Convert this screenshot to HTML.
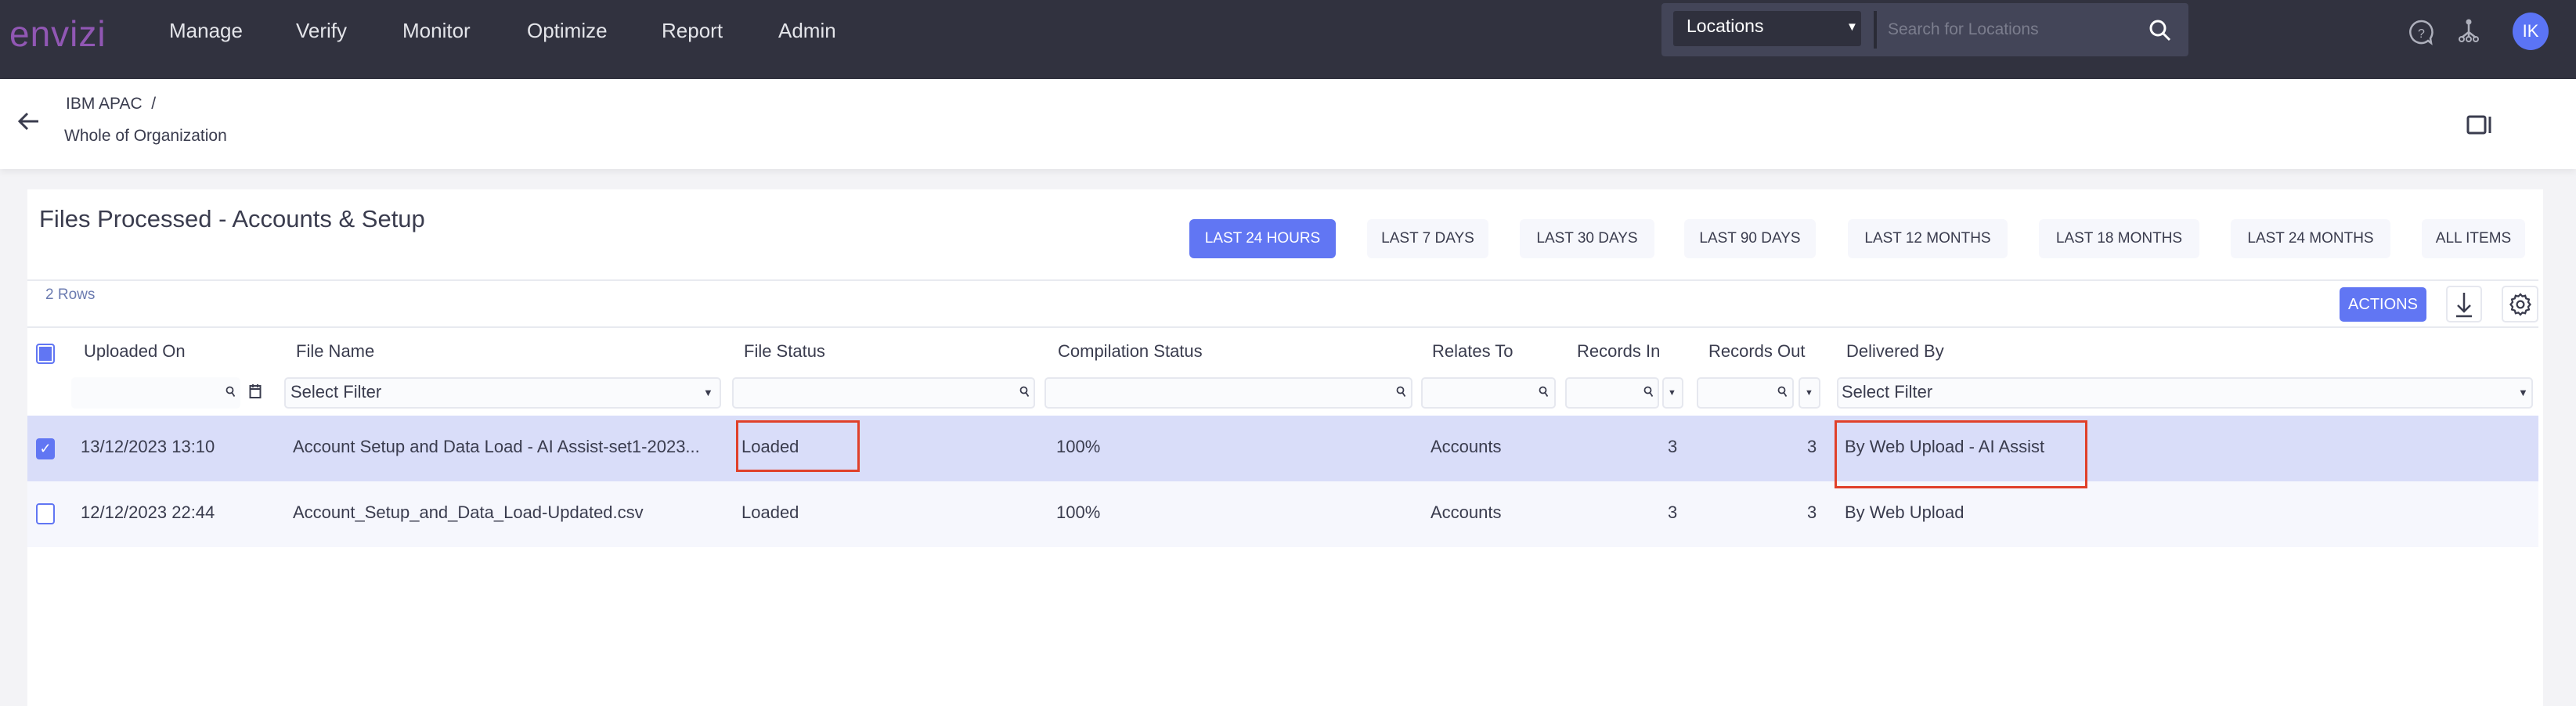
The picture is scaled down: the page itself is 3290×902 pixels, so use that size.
<!DOCTYPE html>
<html><head><meta charset="utf-8"><style>
*{margin:0;padding:0;box-sizing:border-box}
body{width:3290px;height:896px;background:#f3f3f6;font-family:"Liberation Sans",sans-serif;color:#3a3c4e;position:relative;overflow:hidden}
.a{position:absolute;white-space:nowrap}
.hdr{left:0;top:0;width:3290px;height:101px;background:#31323f}
.nav{color:#e4e5ea;font-size:26px;top:24px}
.btn{top:280px;height:50px;background:#f6f7fc;border-radius:6px;font-size:19px;line-height:50px;text-align:center;color:#3a3c4e}
.th{top:436px;font-size:22px;color:#3a3c4e}
.inp{top:482px;height:40px;background:#fafbfd;border:2px solid #e6e8ef;border-radius:5px}
.td{font-size:22px;color:#3a3c4e}
.sr{position:absolute;top:493px}
</style></head><body>
<div class="a hdr"></div>
<div class="a" style="left:12px;top:16px;font-size:46px;color:#9157b4;letter-spacing:1px">envizi</div>
<div class="a nav" style="left:216px">Manage</div>
<div class="a nav" style="left:378px">Verify</div>
<div class="a nav" style="left:514px">Monitor</div>
<div class="a nav" style="left:673px">Optimize</div>
<div class="a nav" style="left:845px">Report</div>
<div class="a nav" style="left:994px">Admin</div>
<div class="a" style="left:2122px;top:4px;width:673px;height:68px;background:#434558;border-radius:4px"></div>
<div class="a" style="left:2137px;top:14px;width:240px;height:45px;background:#2f303d;border-radius:3px"></div>
<div class="a" style="left:2154px;top:20px;font-size:23px;color:#fff">Locations</div>
<div class="a" style="left:2358px;top:26px;font-size:15px;color:#fff">▼</div>
<div class="a" style="left:2393px;top:14px;width:4px;height:48px;background:#2a2b36"></div>
<div class="a" style="left:2411px;top:26px;font-size:21px;color:#7b7d8d">Search for Locations</div>
<svg class="a" style="left:2744px;top:24px" width="30" height="30" viewBox="0 0 30 30"><circle cx="12" cy="12" r="9" fill="none" stroke="#fff" stroke-width="3"/><path d="M19 19l8 8" stroke="#fff" stroke-width="3"/></svg>
<svg class="a" style="left:3076px;top:24px" width="34" height="34" viewBox="0 0 34 34"><path d="M17 3a14 14 0 1 0 8 25l4 3-1-6A14 14 0 0 0 17 3z" fill="none" stroke="#aeb0bc" stroke-width="2.5"/><text x="12" y="24" font-size="16" fill="#aeb0bc" font-family="Liberation Sans">?</text></svg>
<svg class="a" style="left:3138px;top:22px" width="30" height="34" viewBox="0 0 30 34"><circle cx="15" cy="6" r="3.5" fill="#aeb0bc"/><path d="M15 9v10M15 19L6 26M15 19v7M15 19l9 7" stroke="#aeb0bc" stroke-width="2.5" fill="none"/><circle cx="6" cy="28" r="3" fill="none" stroke="#aeb0bc" stroke-width="2"/><circle cx="15" cy="28" r="3" fill="none" stroke="#aeb0bc" stroke-width="2"/><circle cx="24" cy="28" r="3" fill="none" stroke="#aeb0bc" stroke-width="2"/></svg>
<div class="a" style="left:3209px;top:16px;width:46px;height:48px;border-radius:50%;background:#5b74f5;color:#fff;font-size:22px;line-height:48px;text-align:center">IK</div>

<div class="a" style="left:0;top:101px;width:3290px;height:115px;background:#fff;box-shadow:0 4px 8px rgba(0,0,0,.06)"></div>
<svg class="a" style="left:22px;top:141px" width="30" height="28" viewBox="0 0 30 28"><path d="M27 14H4M13 4L3 14l10 10" fill="none" stroke="#3a3c4e" stroke-width="3"/></svg>
<div class="a" style="left:84px;top:121px;font-size:21px;color:#3a3c4e">IBM APAC &nbsp;/</div>
<div class="a" style="left:82px;top:162px;font-size:21px;color:#3a3c4e">Whole of Organization</div>
<svg class="a" style="left:3150px;top:147px" width="34" height="26" viewBox="0 0 34 26"><rect x="2" y="2" width="22" height="21" rx="2" fill="none" stroke="#3a3c4e" stroke-width="3"/><path d="M30 2v21" stroke="#3a3c4e" stroke-width="3"/></svg>

<div class="a" style="left:35px;top:242px;width:3213px;height:660px;background:#fff"></div>
<div class="a" style="left:50px;top:262px;font-size:31px;color:#3a3c4e">Files Processed - Accounts &amp; Setup</div>
<div class="a btn" style="left:1519px;width:187px;background:#6176f3;color:#fff">LAST 24 HOURS</div>
<div class="a btn" style="left:1746px;width:155px">LAST 7 DAYS</div>
<div class="a btn" style="left:1941px;width:172px">LAST 30 DAYS</div>
<div class="a btn" style="left:2151px;width:168px">LAST 90 DAYS</div>
<div class="a btn" style="left:2360px;width:204px">LAST 12 MONTHS</div>
<div class="a btn" style="left:2604px;width:205px">LAST 18 MONTHS</div>
<div class="a btn" style="left:2849px;width:204px">LAST 24 MONTHS</div>
<div class="a btn" style="left:3093px;width:132px">ALL ITEMS</div>
<div class="a" style="left:35px;top:357px;width:3207px;height:2px;background:#e8eaf0"></div>
<div class="a" style="left:58px;top:366px;font-size:19px;color:#6b7bb0">2 Rows</div>
<div class="a" style="left:2988px;top:367px;width:111px;height:44px;background:#6176f3;border-radius:5px;color:#fff;font-size:20px;line-height:44px;text-align:center">ACTIONS</div>
<div class="a" style="left:3124px;top:365px;width:46px;height:47px;border:2px solid #e6e8ef;border-radius:5px"></div>
<svg class="a" style="left:3134px;top:372px" width="26" height="34" viewBox="0 0 26 34"><path d="M13 2v24M5 18l8 8 8-8M3 32h20" fill="none" stroke="#3a3c4e" stroke-width="2.5"/></svg>
<div class="a" style="left:3195px;top:365px;width:47px;height:47px;border:2px solid #e6e8ef;border-radius:5px"></div>
<svg class="a" style="left:3204px;top:374px" width="30" height="30" viewBox="0 0 24 24"><path d="M12 1.5l2 2.2 2.9-.7.9 2.9 2.9.9-.7 2.9 2 2.3-2 2.3.7 2.9-2.9.9-.9 2.9-2.9-.7-2 2.2-2-2.2-2.9.7-.9-2.9-2.9-.9.7-2.9-2-2.3 2-2.3-.7-2.9 2.9-.9.9-2.9 2.9.7z" fill="none" stroke="#3a3c4e" stroke-width="1.8"/><circle cx="12" cy="12" r="3.5" fill="none" stroke="#3a3c4e" stroke-width="1.8"/></svg>

<div class="a" style="left:35px;top:417px;width:3207px;height:2px;background:#e8eaf0"></div>
<div class="a" style="left:46px;top:439px;width:24px;height:26px;border:2px solid #6176f3;border-radius:4px;background:#6176f3;box-shadow:inset 0 0 0 2px #fff"></div>
<div class="a th" style="left:107px">Uploaded On</div>
<div class="a th" style="left:378px">File Name</div>
<div class="a th" style="left:950px">File Status</div>
<div class="a th" style="left:1351px">Compilation Status</div>
<div class="a th" style="left:1829px">Relates To</div>
<div class="a th" style="left:2014px">Records In</div>
<div class="a th" style="left:2182px">Records Out</div>
<div class="a th" style="left:2358px">Delivered By</div>

<div class="a inp" style="left:91px;width:216px;border-color:#fafbfd"></div>
<svg class="a" style="left:318px;top:490px" width="16" height="20" viewBox="0 0 16 20"><rect x="1.5" y="3" width="13" height="15" fill="none" stroke="#3a3c4e" stroke-width="2"/><path d="M1.5 7h13M5 1v4M11 1v4" stroke="#3a3c4e" stroke-width="2"/></svg>
<div class="a inp" style="left:363px;width:558px"></div>
<div class="a" style="left:371px;top:488px;font-size:22px">Select Filter</div>
<div class="a" style="left:898px;top:494px;font-size:13px">▼</div>
<div class="a inp" style="left:935px;width:387px"></div>
<div class="a inp" style="left:1334px;width:470px"></div>
<div class="a inp" style="left:1815px;width:172px"></div>
<div class="a inp" style="left:1999px;width:120px"></div>
<div class="a inp" style="left:2123px;width:27px"></div>
<div class="a inp" style="left:2167px;width:124px"></div>
<div class="a inp" style="left:2297px;width:28px"></div>
<div class="a inp" style="left:2346px;width:889px"></div>
<div class="a" style="left:2352px;top:488px;font-size:22px">Select Filter</div>
<div class="a" style="left:3216px;top:494px;font-size:13px">▼</div>
<svg class="sr" style="left:288px" width="13" height="15" viewBox="0 0 13 15"><circle cx="5.5" cy="5.5" r="4" fill="none" stroke="#3a3c4e" stroke-width="1.8"/><path d="M8.5 9l3 4.5" stroke="#3a3c4e" stroke-width="1.8"/></svg>
<svg class="sr" style="left:1302px" width="13" height="15" viewBox="0 0 13 15"><circle cx="5.5" cy="5.5" r="4" fill="none" stroke="#3a3c4e" stroke-width="1.8"/><path d="M8.5 9l3 4.5" stroke="#3a3c4e" stroke-width="1.8"/></svg>
<svg class="sr" style="left:1783px" width="13" height="15" viewBox="0 0 13 15"><circle cx="5.5" cy="5.5" r="4" fill="none" stroke="#3a3c4e" stroke-width="1.8"/><path d="M8.5 9l3 4.5" stroke="#3a3c4e" stroke-width="1.8"/></svg>
<svg class="sr" style="left:1965px" width="13" height="15" viewBox="0 0 13 15"><circle cx="5.5" cy="5.5" r="4" fill="none" stroke="#3a3c4e" stroke-width="1.8"/><path d="M8.5 9l3 4.5" stroke="#3a3c4e" stroke-width="1.8"/></svg>
<svg class="sr" style="left:2099px" width="13" height="15" viewBox="0 0 13 15"><circle cx="5.5" cy="5.5" r="4" fill="none" stroke="#3a3c4e" stroke-width="1.8"/><path d="M8.5 9l3 4.5" stroke="#3a3c4e" stroke-width="1.8"/></svg>
<svg class="sr" style="left:2270px" width="13" height="15" viewBox="0 0 13 15"><circle cx="5.5" cy="5.5" r="4" fill="none" stroke="#3a3c4e" stroke-width="1.8"/><path d="M8.5 9l3 4.5" stroke="#3a3c4e" stroke-width="1.8"/></svg>
<div class="a" style="left:2130px;top:496px;font-size:11px">▼</div>
<div class="a" style="left:2305px;top:496px;font-size:11px">▼</div>

<div class="a" style="left:35px;top:531px;width:3207px;height:84px;background:#d9ddf9"></div>
<div class="a" style="left:35px;top:615px;width:3207px;height:84px;background:#f6f7fd"></div>
<div class="a" style="left:46px;top:560px;width:24px;height:27px;border-radius:4px;background:#6176f3;color:#fff;font-size:18px;text-align:center;line-height:27px">✓</div>
<div class="a" style="left:46px;top:643px;width:24px;height:27px;border-radius:4px;border:2px solid #6176f3;background:#fff"></div>
<div class="a td" style="left:103px;top:558px">13/12/2023 13:10</div>
<div class="a td" style="left:374px;top:558px">Account Setup and Data Load - AI Assist-set1-2023...</div>
<div class="a td" style="left:947px;top:558px">Loaded</div>
<div class="a td" style="left:1349px;top:558px">100%</div>
<div class="a td" style="left:1827px;top:558px">Accounts</div>
<div class="a td" style="left:2130px;top:558px">3</div>
<div class="a td" style="left:2308px;top:558px">3</div>
<div class="a td" style="left:2356px;top:558px">By Web Upload - AI Assist</div>
<div class="a td" style="left:103px;top:642px">12/12/2023 22:44</div>
<div class="a td" style="left:374px;top:642px">Account_Setup_and_Data_Load-Updated.csv</div>
<div class="a td" style="left:947px;top:642px">Loaded</div>
<div class="a td" style="left:1349px;top:642px">100%</div>
<div class="a td" style="left:1827px;top:642px">Accounts</div>
<div class="a td" style="left:2130px;top:642px">3</div>
<div class="a td" style="left:2308px;top:642px">3</div>
<div class="a td" style="left:2356px;top:642px">By Web Upload</div>
<div class="a" style="left:940px;top:537px;width:158px;height:66px;border:3px solid #e0402a"></div>
<div class="a" style="left:2343px;top:537px;width:323px;height:87px;border:3px solid #e0402a"></div>
</body></html>
